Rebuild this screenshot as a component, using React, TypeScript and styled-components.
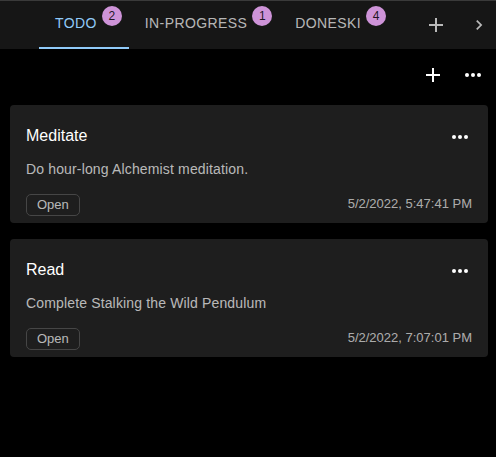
import React from "react";
import styled, { createGlobalStyle } from "styled-components";

const GlobalStyle = createGlobalStyle`
  html, body {
    margin: 0;
    padding: 0;
    background: #000000;
    font-family: "Liberation Sans", Arial, sans-serif;
  }
`;

interface TaskItem {
  title: string;
  description: string;
  status: string;
  created: string;
}

interface TabItem {
  label: string;
  count: number;
}

const tabs: TabItem[] = [
  { label: "TODO", count: 2 },
  { label: "IN-PROGRESS", count: 1 },
  { label: "DONESKI", count: 4 },
];

const tasks: TaskItem[] = [
  {
    title: "Meditate",
    description: "Do hour-long Alchemist meditation.",
    status: "Open",
    created: "5/2/2022, 5:47:41 PM",
  },
  {
    title: "Read",
    description: "Complete Stalking the Wild Pendulum",
    status: "Open",
    created: "5/2/2022, 7:07:01 PM",
  },
];

const Page = styled.div`
  width: 496px;
  min-height: 457px;
  background: #000000;
`;

const TabBar = styled.div`
  display: flex;
  align-items: stretch;
  height: 48px;
  background: #161616;
  border-top: 1px solid #3a3a3a;
  padding-left: 39px;
`;

const Tab = styled.div<{ $active: boolean }>`
  position: relative;
  display: flex;
  align-items: center;
  padding: 0 32px 3px 16px;
  font-size: 14px;
  font-weight: 400;
  letter-spacing: 0.4px;
  line-height: 24px;
  color: ${(p) => (p.$active ? "#90caf9" : "rgba(255, 255, 255, 0.7)")};
  border-bottom: 2px solid ${(p) => (p.$active ? "#90caf9" : "transparent")};
  box-sizing: border-box;
  cursor: pointer;
`;

const Badge = styled.span`
  position: absolute;
  top: 5px;
  right: 7px;
  width: 20px;
  height: 20px;
  border-radius: 50%;
  background: #ce93d8;
  color: rgba(0, 0, 0, 0.87);
  font-size: 12px;
  letter-spacing: 0;
  line-height: 20px;
  text-align: center;
`;

const BarButton = styled.button<{ $width: number }>`
  display: flex;
  align-items: center;
  justify-content: center;
  width: ${(p) => p.$width}px;
  padding: 0;
  border: none;
  background: transparent;
  color: rgba(255, 255, 255, 0.7);
  cursor: pointer;
`;

const AddTabButton = styled(BarButton)`
  margin-left: auto;
`;

const ScrollButton = styled(BarButton)`
  margin-left: 6px;
`;

const Toolbar = styled.div`
  display: flex;
  justify-content: flex-end;
  align-items: center;
  gap: 16px;
  height: 52px;
  padding-right: 11px;
`;

const ToolButton = styled.button`
  display: flex;
  width: 24px;
  height: 24px;
  padding: 0;
  border: none;
  background: transparent;
  color: #ffffff;
  cursor: pointer;
`;

const CardList = styled.div`
  display: flex;
  flex-direction: column;
  gap: 16px;
  padding: 4px 8px 0 10px;
`;

const Card = styled.div`
  display: flex;
  flex-direction: column;
  padding: 16px 16px 7px;
  background: #1e1e1e;
  border-radius: 4px;
`;

const CardHeader = styled.div`
  display: flex;
  justify-content: space-between;
  align-items: flex-start;
  height: 32px;
`;

const Title = styled.div`
  margin-top: 3px;
  font-size: 16px;
  line-height: 24px;
  color: #ffffff;
`;

const MenuButton = styled.button`
  display: flex;
  width: 24px;
  height: 24px;
  margin-top: 4px;
  padding: 0;
  border: none;
  background: transparent;
  color: #ffffff;
  cursor: pointer;
`;

const Description = styled.div`
  margin-top: 6px;
  font-size: 14px;
  line-height: 20px;
  letter-spacing: 0.15px;
  color: rgba(255, 255, 255, 0.7);
`;

const CardFooter = styled.div`
  display: flex;
  justify-content: space-between;
  align-items: center;
  margin-top: 15px;
`;

const StatusChip = styled.span`
  box-sizing: border-box;
  display: block;
  height: 22px;
  padding: 0 10px;
  border: 1px solid #464646;
  border-radius: 5px;
  font-size: 13px;
  line-height: 20px;
  color: rgba(255, 255, 255, 0.7);
`;

const Timestamp = styled.span`
  padding-bottom: 3px;
  font-size: 13px;
  line-height: 16px;
  color: rgba(255, 255, 255, 0.65);
`;

const AddIcon = ({ size = 24 }: { size?: number }) => (
  <svg width={size} height={size} viewBox="0 0 24 24" fill="currentColor">
    <path d="M19 13h-6v6h-2v-6H5v-2h6V5h2v6h6v2z" />
  </svg>
);

const MoreIcon = () => (
  <svg width={24} height={24} viewBox="0 0 24 24" fill="currentColor">
    <circle cx="6" cy="12" r="2" />
    <circle cx="12" cy="12" r="2" />
    <circle cx="18" cy="12" r="2" />
  </svg>
);

const ChevronIcon = () => (
  <svg width={20} height={20} viewBox="0 0 24 24" fill="currentColor">
    <path d="M8.59 16.59 13.17 12 8.59 7.41 10 6l6 6-6 6-1.41-1.41z" />
  </svg>
);

const TaskCard: React.FC<{ task: TaskItem }> = ({ task }) => (
  <Card>
    <CardHeader>
      <Title>{task.title}</Title>
      <MenuButton aria-label="task menu">
        <MoreIcon />
      </MenuButton>
    </CardHeader>
    <Description>{task.description}</Description>
    <CardFooter>
      <StatusChip>{task.status}</StatusChip>
      <Timestamp>{task.created}</Timestamp>
    </CardFooter>
  </Card>
);

export default function App() {
  const activeTab = 0;

  return (
    <Page>
      <GlobalStyle />
      <TabBar>
        {tabs.map((tab, i) => (
          <Tab key={tab.label} $active={i === activeTab}>
            {tab.label}
            <Badge>{tab.count}</Badge>
          </Tab>
        ))}
        <AddTabButton $width={40} aria-label="add list">
          <AddIcon />
        </AddTabButton>
        <ScrollButton $width={34} aria-label="scroll right">
          <ChevronIcon />
        </ScrollButton>
      </TabBar>
      <Toolbar>
        <ToolButton aria-label="add task">
          <AddIcon />
        </ToolButton>
        <ToolButton aria-label="list menu">
          <MoreIcon />
        </ToolButton>
      </Toolbar>
      <CardList>
        {tasks.map((task) => (
          <TaskCard key={task.title} task={task} />
        ))}
      </CardList>
    </Page>
  );
}
